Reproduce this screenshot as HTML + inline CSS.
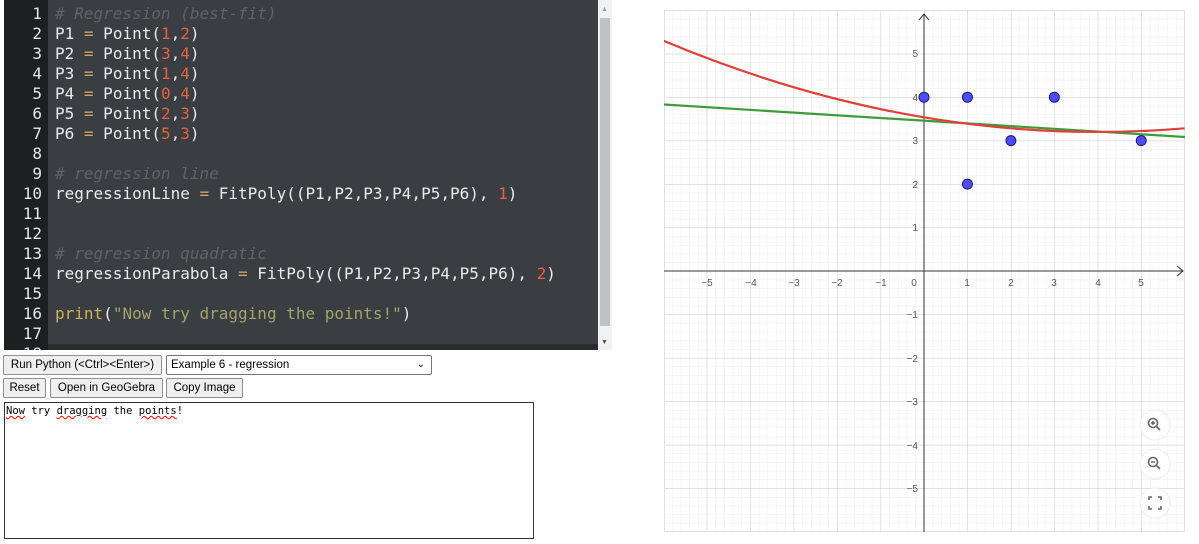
<!DOCTYPE html>
<html><head><meta charset="utf-8"><style>
body{margin:0;width:1199px;height:544px;background:#fff;position:relative;overflow:hidden;font-family:"Liberation Sans",sans-serif}
#ed{position:absolute;left:4px;top:0;width:594px;height:350px;background:#3a3d41;overflow:hidden}
#gut{position:absolute;left:0;top:0;width:44px;height:350px;background:#1e1f21}
.ln{position:absolute;left:0;width:38px;text-align:right;color:#e6e6e6;font:16px/20px "DejaVu Sans Mono",monospace}
.cl{position:absolute;left:51px;color:#eaeaea;font:16px/20px "DejaVu Sans Mono",monospace;white-space:pre}
.n{color:#e5643f}.c{color:#5f6368;font-style:italic}.o{color:#d2a36a}.s{color:#a3a36a}.p{color:#c8b45a}
#sb{position:absolute;left:598px;top:0;width:14px;height:350px;background:#f1f1f1}
#th{position:absolute;left:600px;top:18px;width:10px;height:308px;background:#c1c1c1}
.btn{position:absolute;border:1px solid #8f8f8f;background:#efefef;border-radius:2px;font-size:11.5px;line-height:18px;padding:0 4px;color:#000;box-sizing:border-box;height:20px;white-space:nowrap;text-align:center;overflow:hidden}
#ta{position:absolute;left:4px;top:402px;width:530px;height:137px;border:1px solid #333;box-sizing:border-box;font:10.5px "DejaVu Sans Mono",monospace;padding:2px 1px}
.u{text-decoration:underline wavy red;text-decoration-thickness:1px}
</style></head><body>
<div id="ed"><div id="gut"></div>
<div class="ln" style="top:4px">1</div><div class="ln" style="top:24px">2</div><div class="ln" style="top:44px">3</div><div class="ln" style="top:64px">4</div><div class="ln" style="top:84px">5</div><div class="ln" style="top:104px">6</div><div class="ln" style="top:124px">7</div><div class="ln" style="top:144px">8</div><div class="ln" style="top:164px">9</div><div class="ln" style="top:184px">10</div><div class="ln" style="top:204px">11</div><div class="ln" style="top:224px">12</div><div class="ln" style="top:244px">13</div><div class="ln" style="top:264px">14</div><div class="ln" style="top:284px">15</div><div class="ln" style="top:304px">16</div><div class="ln" style="top:324px">17</div><div class="ln" style="top:344px">18</div>
<div class="cl c" style="top:4px"># Regression (best-fit)</div>
<div class="cl" style="top:24px">P1 <span class="o">=</span> Point(<span class="n">1</span>,<span class="n">2</span>)</div>
<div class="cl" style="top:44px">P2 <span class="o">=</span> Point(<span class="n">3</span>,<span class="n">4</span>)</div>
<div class="cl" style="top:64px">P3 <span class="o">=</span> Point(<span class="n">1</span>,<span class="n">4</span>)</div>
<div class="cl" style="top:84px">P4 <span class="o">=</span> Point(<span class="n">0</span>,<span class="n">4</span>)</div>
<div class="cl" style="top:104px">P5 <span class="o">=</span> Point(<span class="n">2</span>,<span class="n">3</span>)</div>
<div class="cl" style="top:124px">P6 <span class="o">=</span> Point(<span class="n">5</span>,<span class="n">3</span>)</div>
<div class="cl c" style="top:164px"># regression line</div>
<div class="cl" style="top:184px">regressionLine <span class="o">=</span> FitPoly((P1,P2,P3,P4,P5,P6), <span class="n">1</span>)</div>
<div class="cl c" style="top:244px"># regression quadratic</div>
<div class="cl" style="top:264px">regressionParabola <span class="o">=</span> FitPoly((P1,P2,P3,P4,P5,P6), <span class="n">2</span>)</div>
<div class="cl" style="top:304px"><span class="p">print</span>(<span class="s">"Now try dragging the points!"</span>)</div>
<div style="position:absolute;left:44px;top:344px;width:560px;height:6px;background:#2a2c2f"></div>
</div>
<div id="sb"></div><div id="th"></div>
<div style="position:absolute;left:601px;top:6px;font-size:7px;color:#a0a0a0">▲</div>
<div style="position:absolute;left:601px;top:339px;font-size:7px;color:#505050">▼</div>
<div class="btn" style="left:3px;top:355px;width:159px">Run Python (&lt;Ctrl&gt;&lt;Enter&gt;)</div>
<div class="btn" style="left:166px;top:355px;width:266px;background:#fff;border-color:#767676;text-align:left">Example 6 - regression<span style="position:absolute;right:6px;top:0;font-size:10px">&#8964;</span></div>
<div class="btn" style="left:3px;top:378px;width:43px">Reset</div>
<div class="btn" style="left:50px;top:378px;width:113px">Open in GeoGebra</div>
<div class="btn" style="left:166px;top:378px;width:77px">Copy Image</div>
<div id="ta"><span class="u">Now</span> try <span class="u">dragging</span> the <span class="u">points</span>!</div>
<svg style="position:absolute;left:664px;top:10px" width="521" height="522" viewBox="0 0 521 522">
<defs>
<pattern id="mi" patternUnits="userSpaceOnUse" x="260" y="261" width="8.69" height="8.69"><path d="M0 0H8.69M0 0V8.69" stroke="#ececec" stroke-width="1" fill="none"/></pattern>
<pattern id="ma" patternUnits="userSpaceOnUse" x="260" y="261" width="43.45" height="43.45"><path d="M0 0H43.45M0 0V43.45" stroke="#cdcdcd" stroke-width="1" fill="none"/></pattern>
</defs>
<rect width="521" height="522" fill="#fff"/>
<rect width="521" height="522" fill="url(#mi)"/>
<rect width="521" height="522" fill="url(#ma)"/>
<rect x="0.5" y="0.5" width="520" height="521" fill="none" stroke="#e0e0e0"/>
<line x1="0" y1="261" x2="519" y2="261" stroke="#333"/><path d="M513 256L519 261L513 266" stroke="#333" fill="none"/>
<line x1="260" y1="4" x2="260" y2="522" stroke="#333"/><path d="M255 10L260 4L265 10" stroke="#333" fill="none"/>
<g font-size="10" fill="#555" font-family="Liberation Sans,sans-serif" text-anchor="middle">
<text x="43" y="276">−5</text><text x="87" y="276">−4</text><text x="130" y="276">−3</text><text x="173" y="276">−2</text><text x="217" y="276">−1</text><text x="250" y="276">0</text>
<text x="303" y="276">1</text><text x="347" y="276">2</text><text x="390" y="276">3</text><text x="434" y="276">4</text><text x="477" y="276">5</text>
<g text-anchor="end"><text x="254" y="47">5</text><text x="254" y="91">4</text><text x="254" y="134">3</text><text x="254" y="178">2</text><text x="254" y="221">1</text><text x="254" y="308">−1</text><text x="254" y="352">−2</text><text x="254" y="395">−3</text><text x="254" y="439">−4</text><text x="254" y="482">−5</text></g>
</g>
<line x1="0" y1="94.5" x2="521" y2="127" stroke="#3d9b3d" stroke-width="2.2"/>
<path d="M-0.7 30.7Q260 140.2 520.7 118.3" stroke="#e0403a" stroke-width="2.2" fill="none"/>
<g fill="#4d4dff" stroke="#1a1a66" stroke-width="1">
<circle cx="260" cy="87.2" r="5"/><circle cx="303.45" cy="87.2" r="5"/><circle cx="390.35" cy="87.2" r="5"/><circle cx="346.9" cy="130.65" r="5"/><circle cx="477.25" cy="130.65" r="5"/><circle cx="303.45" cy="174.1" r="5"/>
</g>
<g>
<circle cx="491" cy="415" r="15" fill="#fff" stroke="#eee"/><circle cx="491" cy="454" r="15" fill="#fff" stroke="#eee"/><circle cx="491" cy="493" r="15" fill="#fff" stroke="#eee"/>
<g stroke="#666" stroke-width="1.6" fill="none">
<circle cx="489" cy="413" r="4.5"/><path d="M492.3 416.3L496 420M487 413H491M489 411V415"/>
<circle cx="489" cy="452" r="4.5"/><path d="M492.3 455.3L496 459M487 452H491"/>
<path d="M485 490V487H488M494 487H497V490M497 496V499H494M488 499H485V496"/>
</g></g>
</svg>
</body></html>
